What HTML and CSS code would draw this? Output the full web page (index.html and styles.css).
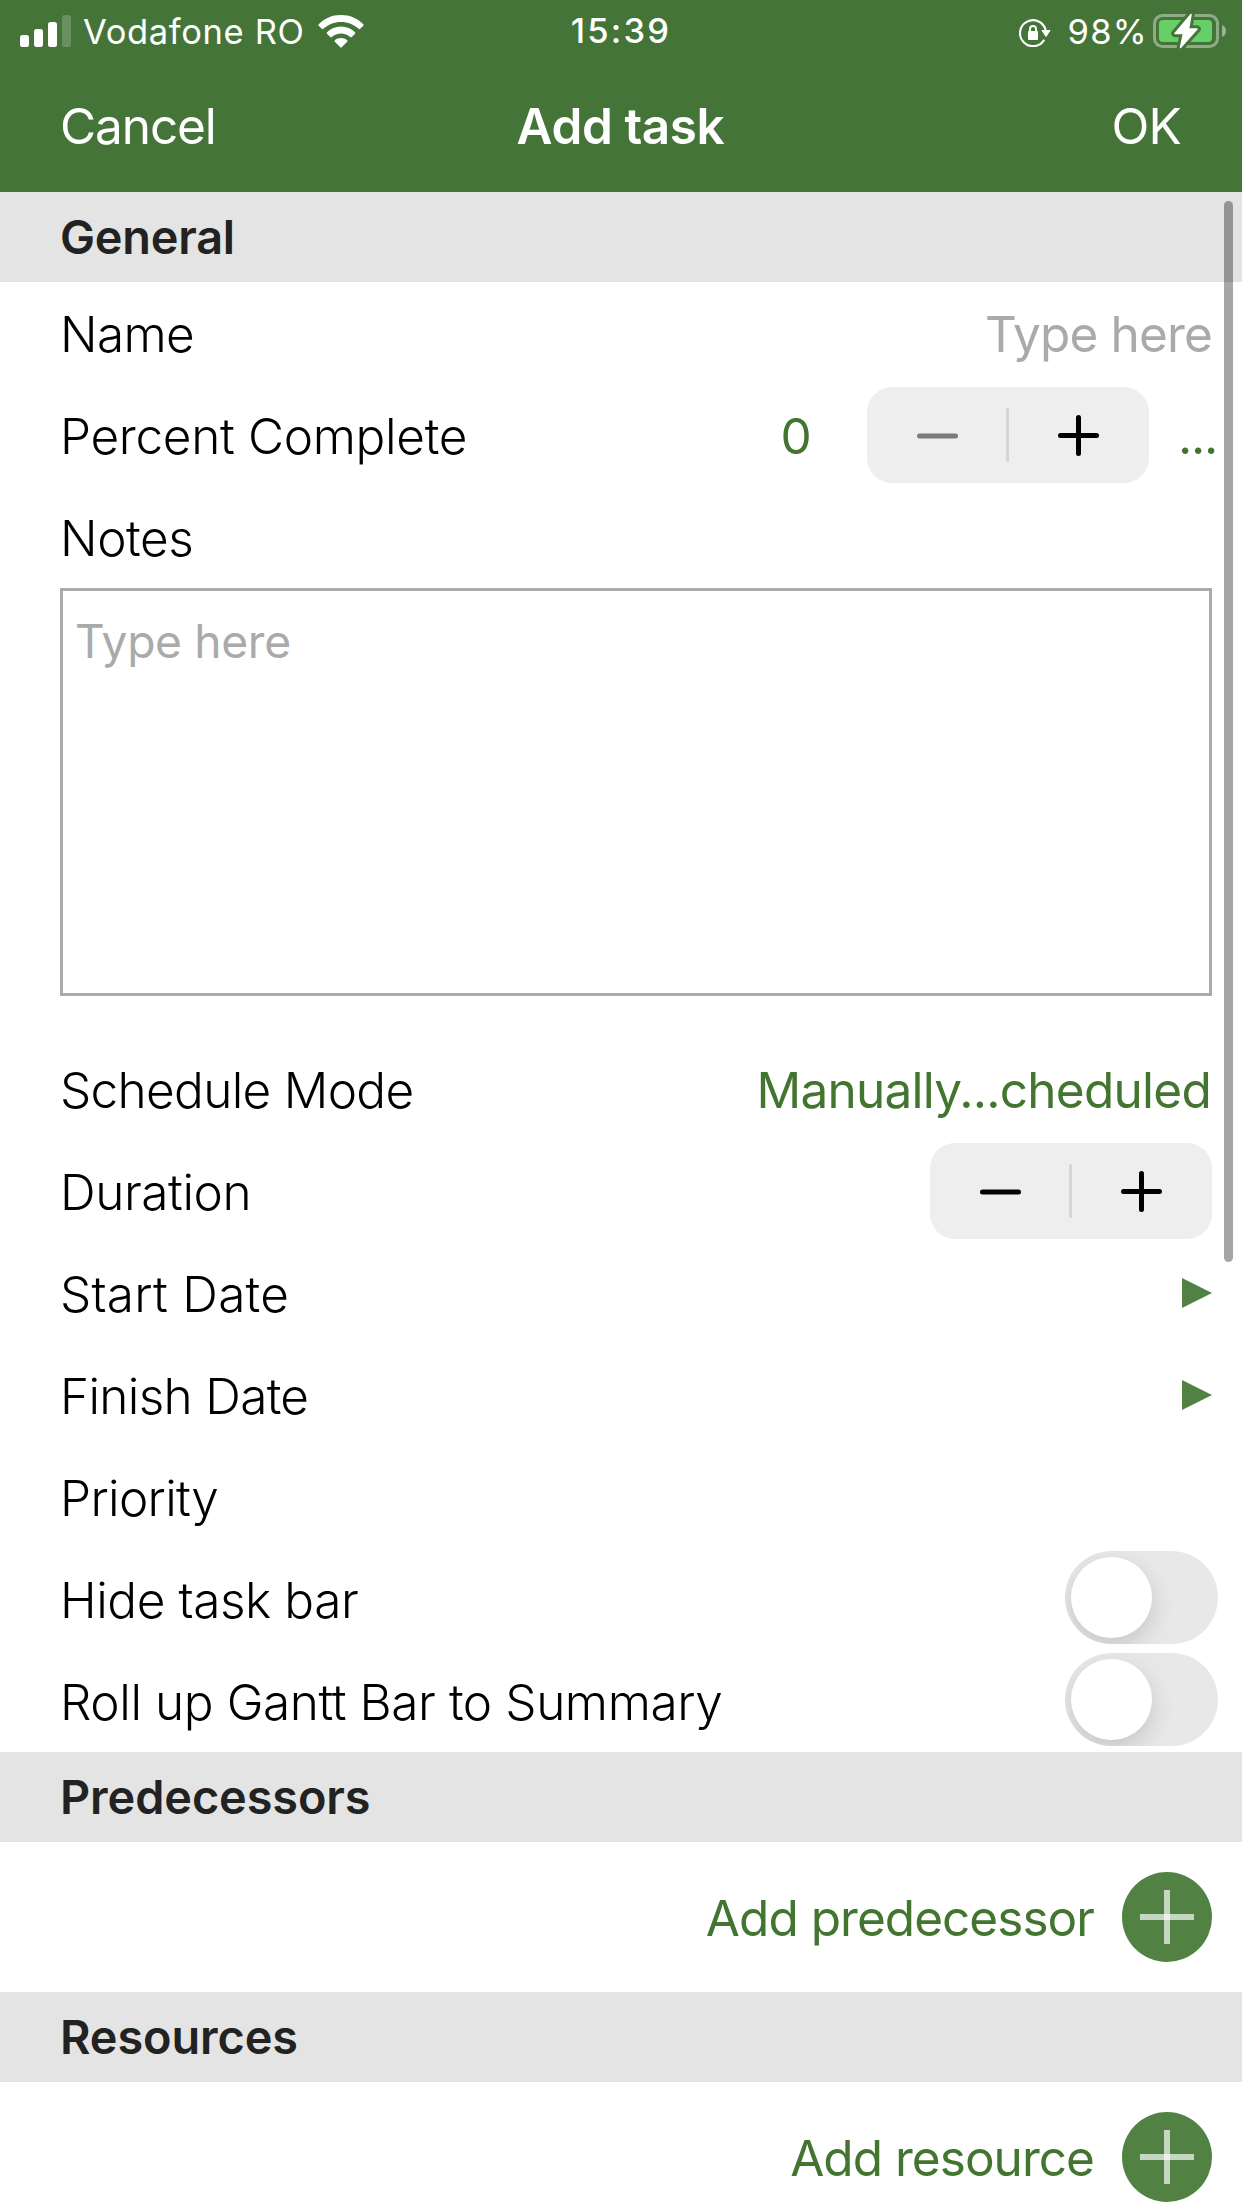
FILE: index.html
```html
<!DOCTYPE html>
<html lang="en">

<head>
    <title>Add task</title>
    <meta charset="UTF-8">
    <meta name="viewport" content="width=device-width, initial-scale=1.0">
    <link rel="stylesheet" href="styles.css">
</head>

<body>
    <header class="mainHeader">
        <div class="statusBar">
            <div class="statusBar-left">
                <svg class="signalIcon" width="51" height="32" viewBox="0 0 51 32" fill="#fff">
                    <rect x="0" y="20" width="9" height="12" rx="2.5" />
                    <rect x="14" y="14" width="9" height="18" rx="2.5" />
                    <rect x="28" y="7" width="9" height="25" rx="2.5" />
                    <rect x="42" y="0" width="9" height="32" rx="2.5" opacity=".2" />
                </svg>
                <span class="statusBar-carrier">Vodafone RO</span>
                <svg class="wifiIcon" width="46" height="33" viewBox="0 0 46 33" fill="#fff">
                    <path d="M23 0C32 0 39.500 3.300 45.300 9.300Q46 10 45.300 10.700L42.200 13.800Q41.500 14.500 40.700 13.800C35.500 9.300 30 6.900 23 6.900S10.500 9.300 5.300 13.800Q4.500 14.500 3.800 13.800L.7 10.700Q0 10 .7 9.300C6.500 3.300 14 0 23 0Z" />
                    <path d="M23 11.500C28.500 11.500 33.200 13.600 37 17.300Q37.700 18 37 18.700L33.800 21.900Q33 22.600 32.200 21.900C29.600 19.600 26.600 18.400 23 18.400S16.400 19.600 13.800 21.900Q13 22.600 12.200 21.900L9 18.700Q8.300 18 9 17.300C12.800 13.600 17.500 11.500 23 11.500Z" />
                    <path d="M23 23C25.500 23 27.500 23.800 29.200 25.200Q30 26 29.200 26.700L23.700 32.300Q23 33 22.300 32.300L16.800 26.700Q16 26 16.800 25.200C18.500 23.800 20.500 23 23 23Z" />
                </svg>
            </div>
            <time class="statusBar-time">15:39</time>
            <div class="statusBar-right">
                <svg class="lockIcon" width="32" height="28" viewBox="0 0 32 28" fill="none" stroke="#fff">
                    <path d="M25.200 20.800A13 13 0 1 1 26.600 11" stroke-width="2.200" />
                    <path d="M23 11.500H31L27 17.500Z" fill="#fff" stroke-width="1" stroke-linejoin="round" />
                    <rect x="9" y="12" width="10" height="9" rx="1" fill="#fff" stroke="none" />
                    <path d="M11 12.500V10Q11 7 14 7T17 10V12.500" stroke-width="2" />
                </svg>
                <span class="statusBar-percent">98%</span>
                <svg class="batteryIcon" width="74" height="36" viewBox="0 0 74 36">
                    <rect x="1.500" y="2.500" width="63" height="31" rx="8" fill="none" stroke="#fff" stroke-opacity=".4" stroke-width="3" />
                    <path d="M69 12Q73 13.500 73 18T69 24Z" fill="#fff" opacity=".45" />
                    <rect x="6" y="7" width="53" height="22" rx="4" fill="#65d068" />
                    <path d="M38 1.500L22 20.500H30.500L27.500 34.500L44 16H35.500Z" fill="#457439" stroke="#457439" stroke-width="7.500" stroke-linejoin="round" />
                    <path d="M38 1.500L22 20.500H30.500L27.500 34.500L44 16H35.500Z" fill="#fff" stroke="#fff" stroke-width="1.500" stroke-linejoin="round" />
                </svg>
            </div>
        </div>
        <nav class="navBar">
            <a class="navBar-cancel">Cancel</a>
            <h1 class="navBar-title">Add task</h1>
            <a class="navBar-ok">OK</a>
        </nav>
    </header>
    <main class="mainContent">
        <section>
            <h2 class="sectionTitle">General</h2>
            <div class="row">
                <span class="row-label tight">Name</span>
                <span class="row-placeholder">Type here</span>
            </div>
            <div class="row row-percent">
                <span class="row-label percent">Percent Complete</span>
                <span class="row-value">0</span>
                <div class="stepper">
                    <span class="stepper-button disabled"><svg width="41" height="41" viewBox="0 0 41 41"><path d="M2.500 21H38.500" /></svg></span>
                    <span class="stepper-divider"></span>
                    <span class="stepper-button"><svg width="41" height="41" viewBox="0 0 41 41"><path d="M2.500 20.500H38.500M20.500 2.500V38.500" /></svg></span>
                </div>
                <span class="row-more">...</span>
            </div>
            <div class="row">
                <span class="row-label">Notes</span>
            </div>
            <div class="notes">Type here</div>
            <div class="row">
                <span class="row-label tight">Schedule Mode</span>
                <span class="row-value">Manually...cheduled</span>
            </div>
            <div class="row">
                <span class="row-label">Duration</span>
                <div class="stepper">
                    <span class="stepper-button"><svg width="41" height="41" viewBox="0 0 41 41"><path d="M2.500 21H38.500" /></svg></span>
                    <span class="stepper-divider"></span>
                    <span class="stepper-button"><svg width="41" height="41" viewBox="0 0 41 41"><path d="M2.500 20.500H38.500M20.500 2.500V38.500" /></svg></span>
                </div>
            </div>
            <div class="row">
                <span class="row-label loose">Start Date</span>
                <svg width="30" height="30" viewBox="0 0 30 30"><path d="M0 0L30 15L0 30Z" fill="#518244" /></svg>
            </div>
            <div class="row">
                <span class="row-label tight">Finish Date</span>
                <svg width="30" height="30" viewBox="0 0 30 30"><path d="M0 0L30 15L0 30Z" fill="#518244" /></svg>
            </div>
            <div class="row">
                <span class="row-label tight">Priority</span>
            </div>
            <div class="row row-toggle">
                <span class="row-label">Hide task bar</span>
                <span class="toggle"></span>
            </div>
            <div class="row row-toggle">
                <span class="row-label">Roll up Gantt Bar to Summary</span>
                <span class="toggle"></span>
            </div>
        </section>
        <section>
            <h2 class="sectionTitle wide">Predecessors</h2>
            <div class="addRow">
                <span class="addRow-label">Add predecessor</span>
                <svg width="90" height="90" viewBox="0 0 90 90">
                    <circle cx="45" cy="45" r="45" fill="#518244" />
                    <path d="M18 45H72" stroke="#fff" stroke-opacity=".67" stroke-width="6" />
                    <path d="M45 18V72" stroke="#fff" stroke-opacity=".67" stroke-width="6" />
                </svg>
            </div>
        </section>
        <section>
            <h2 class="sectionTitle wide">Resources</h2>
            <div class="addRow">
                <span class="addRow-label">Add resource</span>
                <svg width="90" height="90" viewBox="0 0 90 90">
                    <circle cx="45" cy="45" r="45" fill="#518244" />
                    <path d="M18 45H72" stroke="#fff" stroke-opacity=".67" stroke-width="6" />
                    <path d="M45 18V72" stroke="#fff" stroke-opacity=".67" stroke-width="6" />
                </svg>
            </div>
        </section>
        <div class="scrollbar"></div>
    </main>
</body>

</html>
```
FILE: styles.css
```css
* {
    box-sizing: border-box;
}

body {
    margin: 0;
    height: 2208px;
    overflow: hidden;
    display: flex;
    flex-direction: column;
    background: white;
    color: black;
    font-family: Inter, 'Liberation Sans', sans-serif;
    font-size: 49.5px;
    font-weight: 300;
    line-height: 60px;
    white-space: nowrap;
}

svg {
    display: block;
    flex: none;
}

.mainHeader {
    height: 192px;
    flex: none;
    background: #457439;
    color: white;
    font-weight: 400;
}

/* status bar */
.statusBar {
    height: 60px;
    display: grid;
    grid-template-columns: 1fr auto 1fr;
    font-size: 34.5px;
}

.statusBar-left,
.statusBar-right {
    display: flex;
    align-items: center;
}

.statusBar-left {
    padding-left: 20px;
}

.statusBar-right {
    justify-content: flex-end;
    padding-right: 15px;
}

.statusBar-carrier {
    padding-top: 2px;
    margin: 0 13px 0 12px;
    letter-spacing: .65px;
}

.statusBar-time {
    padding-top: 1px;
    font-weight: 500;
    letter-spacing: 2.200px;
}

.statusBar-percent {
    padding-top: 2px;
    margin: 0 5px 0 16px;
    letter-spacing: 1.300px;
}

.lockIcon {
    margin-top: 4px;
}

/* nav bar */
.navBar {
    height: 132px;
    padding: 0 61px 0 60px;
    display: grid;
    grid-template-columns: 1fr auto 1fr;
    align-items: center;
}

.navBar-cancel {
    letter-spacing: -1.100px;
}

.navBar-title {
    margin: 0;
    font-size: 49.5px;
    font-weight: 600;
    letter-spacing: -.4px;
}

.navBar-ok {
    text-align: right;
    letter-spacing: -.85px;
}

/* form */
.mainContent {
    position: relative;
    flex: 1;
}

.sectionTitle {
    margin: 0;
    padding-left: 60px;
    height: 90px;
    background: #e4e4e4;
    color: #222;
    font-size: 46.8px;
    font-weight: 600;
    line-height: 90px;
    letter-spacing: -.2px;
}

.sectionTitle.wide {
    letter-spacing: -.08px;
}

.row {
    height: 102px;
    padding: 0 30px 0 60px;
    display: flex;
    align-items: center;
}

.row-label {
    flex: 1;
    padding-top: 2px;
    letter-spacing: -.42px;
}

.row-label.tight {
    letter-spacing: -.68px;
}

.row-label.percent {
    letter-spacing: -.33px;
}

.row-label.loose {
    letter-spacing: .25px;
}

.row-placeholder {
    padding-top: 2px;
    font-weight: 400;
    color: #aaa;
    letter-spacing: -.85px;
}

.row-value,
.row-more {
    padding-top: 2px;
    font-weight: 400;
    color: #42752f;
    letter-spacing: -.74px;
}

.row-value {
    margin-right: 1px;
}

.row-percent {
    padding-right: 25px;
}

.row-percent .row-value {
    margin-right: 56px;
}

.row-more {
    margin-left: 29px;
    letter-spacing: -1.300px;
}

.row-toggle {
    padding-right: 24px;
}

.notes {
    height: 408px;
    margin: 0 30px 42px 60px;
    padding: 20px 12px;
    border: 3px solid #aaa;
    color: #aaa;
    font-size: 46.2px;
    font-weight: 400;
    letter-spacing: -.35px;
}

.stepper {
    width: 282px;
    height: 96px;
    display: flex;
    align-items: center;
    background: #eee;
    border-radius: 25px;
}

.stepper-button {
    flex: 1;
    display: flex;
    justify-content: center;
}

.stepper-button svg {
    stroke: black;
    stroke-width: 5;
    stroke-linecap: round;
}

.stepper-button.disabled svg {
    stroke: #7b7b7b;
}

.stepper-divider {
    width: 3px;
    height: 54px;
    margin: 0 -1px 0 -2px;
    border-radius: 1.500px;
    background: #d5d5d5;
}

.toggle {
    width: 153px;
    height: 93px;
    margin-bottom: 3px;
    padding: 6px;
    border-radius: 47px;
    background: #e8e8e8;
    overflow: hidden;
}

.toggle::before {
    content: '';
    display: block;
    width: 81px;
    height: 81px;
    border-radius: 50%;
    background: white;
    box-shadow: 0 9px 24px rgba(0, 0, 0, .15);
}

.addRow {
    height: 150px;
    padding-right: 30px;
    display: flex;
    align-items: center;
    justify-content: flex-end;
    gap: 28px;
}

.addRow-label {
    padding-top: 2px;
    font-weight: 400;
    color: #42752f;
    letter-spacing: -.96px;
}

/* thumb lies over the form */
.scrollbar {
    position: absolute;
    top: 9px;
    right: 9px;
    width: 9px;
    height: 1061px;
    border-radius: 5px;
    background: rgba(0, 0, 0, .35);
}
```
